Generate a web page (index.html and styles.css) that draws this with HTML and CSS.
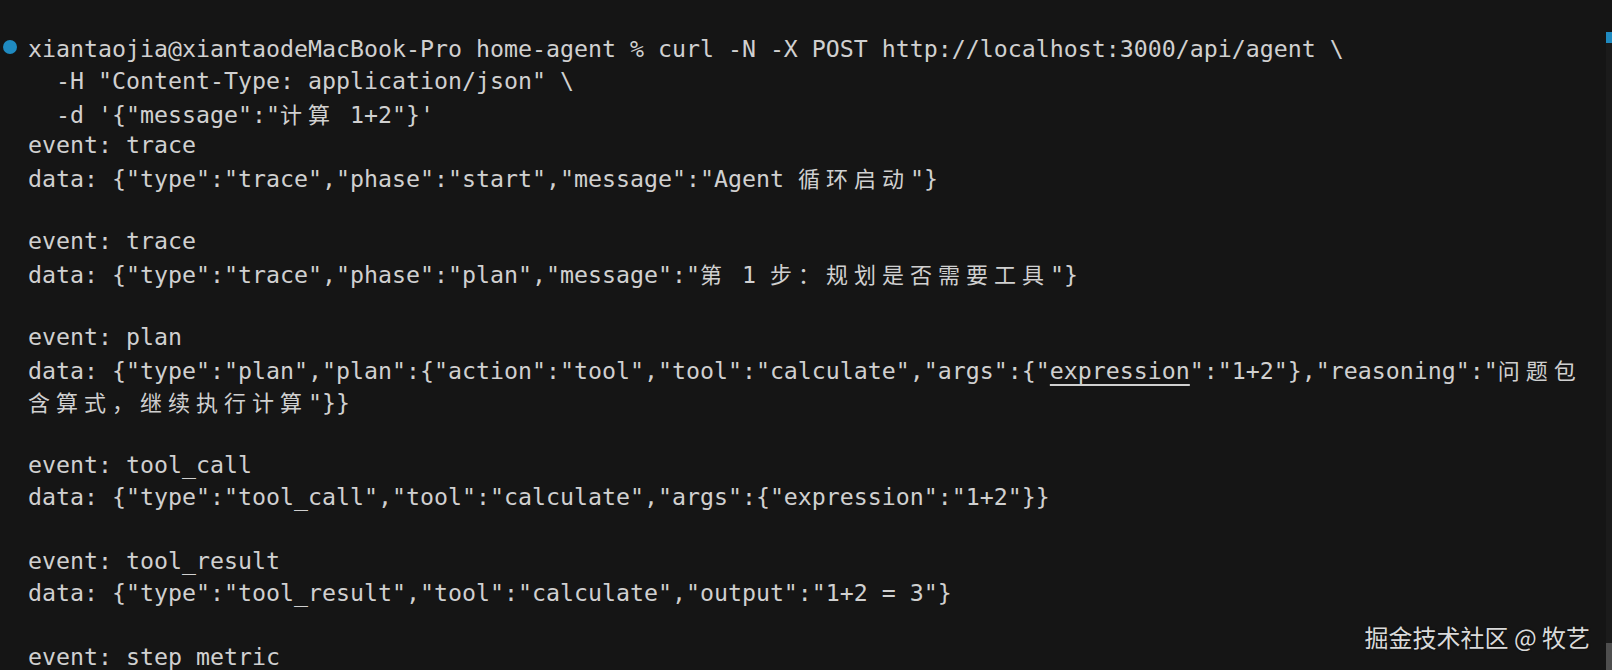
FILE: index.html
```html
<!DOCTYPE html>
<html lang="zh">
<head>
<meta charset="utf-8">
<title>Terminal</title>
<link rel="stylesheet" href="styles.css">
</head>
<body>
<div class="window">
  <div class="term">
    <div class="gutter"><span class="dot"></span></div>
    <div class="lines">
      <div class="line">xiantaojia@xiantaodeMacBook-Pro home-agent % curl -N -X POST http://localhost:3000/api/agent \</div>
      <div class="line">  -H "Content-Type: application/json" \</div>
      <div class="line">  -d '{"message":"<span class="cjk">计算</span> 1+2"}'</div>
      <div class="line">event: trace</div>
      <div class="line">data: {"type":"trace","phase":"start","message":"Agent <span class="cjk">循环启动</span>"}</div>
      <div class="line"> </div>
      <div class="line">event: trace</div>
      <div class="line">data: {"type":"trace","phase":"plan","message":"<span class="cjk">第</span> 1 <span class="cjk">步：规划是否需要工具</span>"}</div>
      <div class="line"> </div>
      <div class="line">event: plan</div>
      <div class="line">data: {"type":"plan","plan":{"action":"tool","tool":"calculate","args":{"<span class="link">expression</span>":"1+2"},"reasoning":"<span class="cjk">问题包</span></div>
      <div class="line"><span class="cjk">含算式，继续执行计算</span>"}}</div>
      <div class="line"> </div>
      <div class="line">event: tool_call</div>
      <div class="line">data: {"type":"tool_call","tool":"calculate","args":{"expression":"1+2"}}</div>
      <div class="line"> </div>
      <div class="line">event: tool_result</div>
      <div class="line">data: {"type":"tool_result","tool":"calculate","output":"1+2 = 3"}</div>
      <div class="line"> </div>
      <div class="line">event: step_metric</div>
    </div>
  </div>
  <div class="scrollbar">
    <div class="marker"></div>
    <div class="track"></div>
    <div class="thumb"></div>
  </div>
  <div class="watermark">掘金技术社区 @ 牧艺</div>
</div>
</body>
</html>
```

FILE: styles.css
```css
html, body {
  margin: 0;
  padding: 0;
  background: #151515;
  overflow: hidden;
}

.window {
  position: relative;
  display: flex;
  width: 1612px;
  height: 670px;
  overflow: hidden;
  background: #151515;
}

.term {
  flex: 1;
  display: flex;
  padding-top: 33px;
  min-width: 0;
}

.gutter {
  width: 28px;
  flex: none;
}

.dot {
  display: block;
  width: 14px;
  height: 14px;
  margin: 7px 0 0 3px;
  border-radius: 50%;
  background: #1f8ac0;
}

.lines {
  flex: 1;
  min-width: 0;
  font-family: "DejaVu Sans Mono", "Liberation Mono", monospace;
  font-size: 23.26px;
  color: #d0d0d0;
}

.line {
  height: 32px;
  line-height: 32px;
  white-space: pre;
}

.cjk {
  font-family: "Noto Sans CJK SC", sans-serif;
  font-size: 22px;
  letter-spacing: 6px;
  line-height: 32px;
}

.link {
  text-decoration: underline;
  text-underline-offset: 5px;
  text-decoration-thickness: 2px;
}

.scrollbar {
  width: 6px;
  flex: none;
  display: flex;
  flex-direction: column;
  padding-top: 32px;
  background: #151515;
}

.marker {
  height: 11px;
  background: #1f8ac0;
}

.track {
  flex: 1;
  background: #1b1b1b;
}

.thumb {
  height: 27px;
  background: #4e4e4e;
}

.watermark {
  position: absolute;
  right: 22px;
  bottom: 21px;
  font-family: "Noto Sans CJK SC", sans-serif;
  font-size: 24px;
  line-height: 24px;
  color: #dadada;
  text-shadow: 0 0 2px rgba(0, 0, 0, 0.6);
}
```
